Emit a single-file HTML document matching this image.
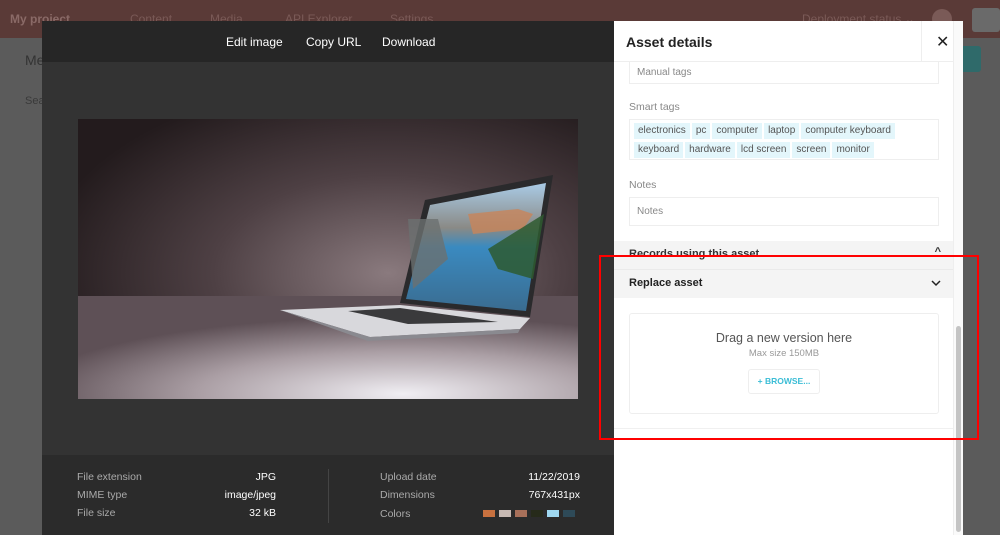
<!DOCTYPE html>
<html><head><meta charset="utf-8"><style>
*{box-sizing:border-box;margin:0;padding:0}
body{width:1000px;height:535px;overflow:hidden;position:relative;font-family:"Liberation Sans",sans-serif;background:#5b5b5b}
.topbar{position:absolute;left:0;top:0;width:1000px;height:38px;background:#5a3a37;color:#7a5a57;font-size:12px}
.abs{position:absolute}
.modal{position:absolute;left:42px;top:21px;width:572px;height:514px;background:#333}
.mh{position:absolute;left:0;top:0;width:572px;height:41px;background:#262626;color:#fff;font-size:12px}
.mh span{position:absolute;top:14px}
.info{position:absolute;left:0;top:434px;width:572px;height:80px;background:#2b2b2b;font-size:10.5px;color:#aaa}
.info .v{color:#fff;text-align:right;position:absolute}
.panel{position:absolute;left:614px;top:21px;width:349px;height:514px;background:#fff}
.ph{position:absolute;left:0;top:0;width:349px;height:41px;border-bottom:1px solid #eee;font-size:14px;font-weight:bold;color:#222}
.field{position:absolute;left:15px;width:310px;border:1px solid #eee;font-size:10px;color:#888;padding-left:7px}
.lbl{position:absolute;left:15px;font-size:10.5px;color:#888}
.tag{display:inline-block;background:#e3f6fb;color:#555;font-size:10px;padding:2px 4px;margin:0 2px 3px 0;line-height:12px}
</style></head><body>
<div class="topbar">
<span class="abs" style="left:10px;top:12px;font-weight:bold;color:#8a6a67">My project</span>
<span class="abs" style="left:130px;top:12px">Content</span>
<span class="abs" style="left:210px;top:12px">Media</span>
<span class="abs" style="left:285px;top:12px">API Explorer</span>
<span class="abs" style="left:390px;top:12px">Settings</span>
<span class="abs" style="left:802px;top:12px">Deployment status ⌄</span>
<div class="abs" style="left:932px;top:9px;width:20px;height:20px;border-radius:50%;background:#7a5a57"></div>
<div class="abs" style="left:972px;top:8px;width:28px;height:24px;border-radius:3px;background:#6a6a6a"></div>
</div>
<span class="abs" style="left:25px;top:52px;color:#333;font-size:14px">Me</span>
<span class="abs" style="left:25px;top:95px;color:#3a3a3a;font-size:11px">Sea</span>
<div class="abs" style="left:963px;top:46px;width:18px;height:26px;background:#2f6a6a;border-radius:0 3px 3px 0"></div>
<div class="modal">
<div class="mh"><span style="left:184px">Edit image</span><span style="left:264px">Copy URL</span><span style="left:340px">Download</span></div>
<svg class="abs" style="left:36px;top:98px" width="500" height="280" viewBox="0 0 500 280">
<defs>
<radialGradient id="bg" cx="0.62" cy="0.55" r="0.7"><stop offset="0" stop-color="#8a7a7e"/><stop offset="0.5" stop-color="#4e4044"/><stop offset="1" stop-color="#231b1d"/></radialGradient>
<radialGradient id="fl" cx="0.65" cy="0.95" r="0.75"><stop offset="0" stop-color="#f0eef3"/><stop offset="0.55" stop-color="#aa9ea4"/><stop offset="1" stop-color="#5e5056"/></radialGradient>
<linearGradient id="scr" x1="0" y1="0" x2="0" y2="1"><stop offset="0" stop-color="#a9cbe6"/><stop offset="0.35" stop-color="#8a8a86"/><stop offset="0.5" stop-color="#3a8ac0"/><stop offset="1" stop-color="#3a6c90"/></linearGradient>
</defs>
<rect width="500" height="280" fill="url(#bg)"/>
<rect y="177" width="500" height="103" fill="url(#fl)"/>
<polygon points="347,81 475,56 452,198 322,184" fill="#2a2a2c"/>
<polygon points="352,86 468,64 448,192 328,180" fill="url(#scr)"/>
<polygon points="390,95 420,92 440,90 455,95 445,110 395,115" fill="#c8855a" opacity="0.8"/>
<polygon points="410,130 466,95 455,160 420,150" fill="#2e5a30" opacity="0.85"/>
<polygon points="330,100 360,100 370,140 335,170" fill="#6c7070" opacity="0.8"/>
<polygon points="202,191 322,186 452,199 442,210 292,218" fill="#d8d8dc"/>
<polygon points="202,191 292,218 442,210 440,214 290,222" fill="#8a8a90"/>
<polygon points="270,192 322,189 420,203 330,205" fill="#3a3a3c"/>
</svg>
<div class="info">
<span class="abs" style="left:35px;top:16px">File extension</span><span class="v" style="right:338px;top:16px">JPG</span>
<span class="abs" style="left:35px;top:34px">MIME type</span><span class="v" style="right:338px;top:34px">image/jpeg</span>
<span class="abs" style="left:35px;top:52px">File size</span><span class="v" style="right:338px;top:52px">32 kB</span>
<div class="abs" style="left:286px;top:14px;width:1px;height:54px;background:#444"></div>
<span class="abs" style="left:338px;top:16px">Upload date</span><span class="v" style="right:34px;top:16px">11/22/2019</span>
<span class="abs" style="left:338px;top:34px">Dimensions</span><span class="v" style="right:34px;top:34px">767x431px</span>
<span class="abs" style="left:338px;top:53px">Colors</span>
<div class="abs" style="left:441px;top:55px;display:flex;gap:4px">
<i style="width:12px;height:7px;background:#c8713f"></i><i style="width:12px;height:7px;background:#c8bab4"></i><i style="width:12px;height:7px;background:#a8705a"></i><i style="width:12px;height:7px;background:#262a1a"></i><i style="width:12px;height:7px;background:#9fd8f0"></i><i style="width:12px;height:7px;background:#2e4a58"></i>
</div>
</div>
</div>
<div class="panel">
<div class="ph"><span class="abs" style="left:12px;top:13px">Asset details</span>
<div class="abs" style="left:307px;top:0;width:1px;height:41px;background:#eee"></div>
<span class="abs" style="left:322px;top:11px;font-weight:normal;font-size:16px">✕</span></div>
<div class="field" style="top:41px;height:22px;padding-top:5px;border-top:none">Manual tags</div>
<span class="lbl" style="top:80px">Smart tags</span>
<div class="field" style="top:98px;height:41px;padding:3px 4px">
<span class="tag">electronics</span><span class="tag">pc</span><span class="tag">computer</span><span class="tag">laptop</span><span class="tag">computer keyboard</span><br><span class="tag">keyboard</span><span class="tag">hardware</span><span class="tag">lcd screen</span><span class="tag">screen</span><span class="tag">monitor</span>
</div>
<span class="lbl" style="top:158px">Notes</span>
<div class="field" style="top:176px;height:29px;padding-top:8px">Notes</div>
<div class="abs" style="left:0;top:220px;width:339px;height:29px;background:#f4f4f4;border-bottom:1px solid #eaeaea;font-size:11px;font-weight:bold;color:#333"><span class="abs" style="left:15px;top:7px">Records using this asset</span><span class="abs" style="right:12px;top:5px">^</span></div>
<div class="abs" style="left:0;top:249px;width:339px;height:28px;background:#f4f4f4;font-size:11px;font-weight:bold;color:#222"><span class="abs" style="left:15px;top:7px">Replace asset</span>
<svg class="abs" style="right:12px;top:10px" width="10" height="7"><path d="M1 1l4 4 4-4" fill="none" stroke="#222" stroke-width="1.5"/></svg></div>
<div class="abs" style="left:15px;top:292px;width:310px;height:101px;border:1px solid #eee;border-radius:3px;text-align:center">
<div style="margin-top:17px;font-size:12.5px;color:#555">Drag a new version here</div>
<div style="margin-top:3px;font-size:9.5px;color:#999">Max size 150MB</div>
<div style="margin:10px auto 0;width:72px;height:25px;border:1px solid #eee;border-radius:3px;font-size:8.5px;font-weight:bold;color:#3bbdd6;line-height:23px">+ BROWSE...</div>
</div>
<div class="abs" style="left:0;top:407px;width:339px;height:1px;background:#f0f0f0"></div>
<div class="abs" style="left:339px;top:0;width:10px;height:514px;background:#fafafa;border-left:1px solid #eee"></div>
<div class="abs" style="left:342px;top:305px;width:5px;height:206px;background:#c4c4c4;border-radius:3px"></div>
</div>
<div class="abs" style="left:599px;top:255px;width:380px;height:185px;border:2px solid #f00"></div>
</body></html>
